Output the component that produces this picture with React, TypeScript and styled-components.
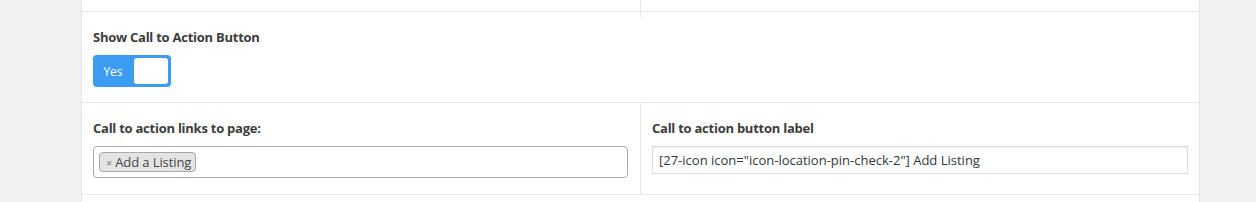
import styled, { createGlobalStyle } from 'styled-components';

const GlobalStyle = createGlobalStyle`
  html, body {
    margin: 0;
    padding: 0;
    background: #f1f1f1;
    font-family: "Open Sans", "Noto Sans", sans-serif;
    color: #444;
  }
`;

const Page = styled.div`
  display: flex;
  padding-left: 81px;
  height: 202px;
  overflow: hidden;
`;

const Panel = styled.div`
  width: 1117px;
  background: #fff;
  border-left: 1px solid #e5e5e5;
  border-right: 1px solid #e5e5e5;
`;

const Row = styled.div<{ $height: number }>`
  display: flex;
  height: ${(p) => p.$height}px;
  border-bottom: 1px solid #e8e8e8;
`;

const Cell = styled.div<{ $divider?: boolean }>`
  flex: ${(p) => (p.$divider ? '0 0 559px' : '1')};
  box-sizing: border-box;
  padding: 17px ${(p) => (p.$divider ? '12px' : '11px')} 0 11px;
  border-right: ${(p) => (p.$divider ? '1px solid #e8e8e8' : 'none')};
`;

const Label = styled.div`
  font-size: 13px;
  font-weight: 700;
  color: #3c3c3c;
  line-height: 16px;
  margin-bottom: 10px;
  letter-spacing: -0.25px;
`;

const Toggle = styled.div`
  display: flex;
  align-items: center;
  width: 78px;
  height: 32px;
  box-sizing: border-box;
  padding: 3px 3px 3px 0;
  background: #3b9cf1;
  border-radius: 4px;
`;

const ToggleText = styled.span`
  flex: 1;
  text-align: center;
  color: #fff;
  font-size: 12px;
  padding-right: 1px;
`;

const Knob = styled.span`
  width: 34px;
  height: 26px;
  background: #fff;
  border-radius: 3px;
`;

const Select = styled.div`
  display: flex;
  align-items: center;
  height: 32px;
  box-sizing: border-box;
  border: 1px solid #aaa;
  border-radius: 4px;
  padding: 0 5px;
`;

const Tag = styled.span`
  display: inline-flex;
  align-items: center;
  height: 20px;
  box-sizing: border-box;
  padding: 0 4px 0 6px;
  background: #e4e4e4;
  border: 1px solid #aaa;
  border-radius: 4px;
  font-size: 13px;
  color: #444;
  letter-spacing: -0.1px;
`;

const TagRemove = styled.span`
  color: #999;
  font-weight: 700;
  font-size: 11px;
  margin-right: 3px;
`;

const Input = styled.div`
  height: 28px;
  box-sizing: border-box;
  border: 1px solid #ddd;
  box-shadow: inset 0 1px 2px rgba(0, 0, 0, 0.07);
  padding: 0 6px;
  display: flex;
  align-items: center;
  font-size: 13px;
  color: #32373c;
  white-space: nowrap;
`;

export default function App() {
  return (
    <>
      <GlobalStyle />
      <Page>
        <Panel>
          <Row $height={11}>
            <Cell $divider />
            <Cell />
          </Row>
          <Row $height={90}>
            <Cell>
              <Label>Show Call to Action Button</Label>
              <Toggle>
                <ToggleText>Yes</ToggleText>
                <Knob />
              </Toggle>
            </Cell>
          </Row>
          <Row $height={91}>
            <Cell $divider>
              <Label>Call to action links to page:</Label>
              <Select>
                <Tag>
                  <TagRemove>×</TagRemove>Add a Listing
                </Tag>
              </Select>
            </Cell>
            <Cell>
              <Label>Call to action button label</Label>
              <Input>[27-icon icon="icon-location-pin-check-2"] Add Listing</Input>
            </Cell>
          </Row>
          <Row $height={20} />
        </Panel>
      </Page>
    </>
  );
}
